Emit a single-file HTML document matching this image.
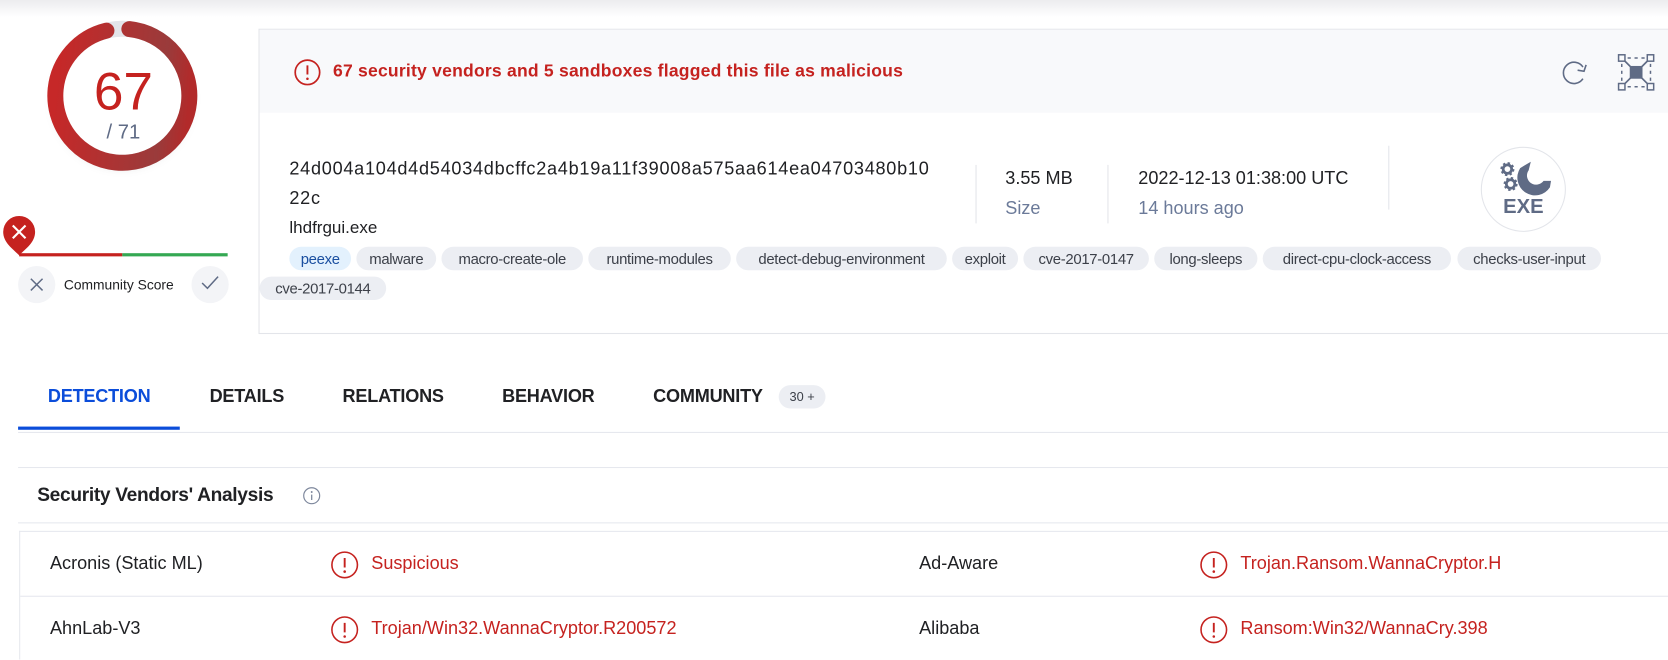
<!DOCTYPE html>
<html><head><meta charset="utf-8"><style>
*{margin:0;padding:0;box-sizing:border-box}
html,body{width:1668px;height:660px;overflow:hidden}
body{background:#fff;font-family:"Liberation Sans",Arial,sans-serif;color:#202124;position:relative}
#w{position:absolute;left:0;top:0;width:1568px;height:620px;transform:scale(1.0638);transform-origin:0 0;overflow:hidden}
.a{position:absolute;white-space:nowrap}
.tag{position:absolute;height:22px;border-radius:11px;background:#eceef3;color:#3c4049;font-size:14px;line-height:22px;text-align:center;letter-spacing:-0.3px}
.vl{position:absolute;width:1px;background:#e3e5ea}
.hl{position:absolute;height:1px;background:#e6e8ee;left:17px;right:0}
.tab{position:absolute;top:363px;font-size:17px;font-weight:bold;color:#202124;letter-spacing:-0.2px}
.row{position:absolute;font-size:17px;color:#202124}
.red{color:#c5221f}
</style></head><body><div id="w">
<div style="position:absolute;left:0;top:0;width:1568px;height:16px;background:linear-gradient(#ececee,#fff)"></div>

<svg class="a" style="left:30px;top:15px" width="170" height="170" viewBox="0 0 170 170">
<defs><linearGradient id="g" x1="0" y1="0" x2="0" y2="1"><stop offset="0" stop-color="#c62828"/><stop offset="0.8" stop-color="#9a3b3b"/><stop offset="1" stop-color="#b22a2a"/></linearGradient>
<filter id="s"><feDropShadow dx="0" dy="3" stdDeviation="5" flood-opacity="0.18"/></filter></defs>
<circle cx="85" cy="75" r="63" fill="#fff" filter="url(#s)"/>
<circle cx="85" cy="75" r="63" fill="none" stroke="#e3e5ea" stroke-width="15"/>
<circle cx="85" cy="75" r="63" fill="none" stroke="url(#g)" stroke-width="15" stroke-linecap="round" stroke-dasharray="374 500" transform="rotate(-84 85 75)"/>
</svg>
<div class="a" style="left:60px;top:58px;width:112px;text-align:center;font-size:50px;color:#c5221f;line-height:56px">67</div>
<div class="a" style="left:60px;top:114px;width:112px;text-align:center;font-size:19px;color:#5f6b85">/ 71</div>

<svg class="a" style="left:1px;top:201px" width="34" height="40" viewBox="0 0 34 40"><path d="M17 39 C11 33 2 27 2 17 A15 15 0 0 1 32 17 C32 27 23 33 17 39Z" fill="#c5221f"/><path d="M11 11 L23 23 M23 11 L11 23" stroke="#fff" stroke-width="2"/></svg>
<div class="a" style="left:18px;top:238px;width:97px;height:3px;background:#c5221f"></div>
<div class="a" style="left:115px;top:238px;width:99px;height:3px;background:#34a853"></div>
<div class="a" style="left:17px;top:250px;width:35px;height:35px;border-radius:50%;background:#f3f4f7"></div>
<svg class="a" style="left:28px;top:261px" width="13" height="13"><path d="M1 1L12 12M12 1L1 12" stroke="#5f6b85" stroke-width="1.4"/></svg>
<div class="a" style="left:60px;top:260px;font-size:13px;color:#202124">Community Score</div>
<div class="a" style="left:180px;top:250px;width:35px;height:35px;border-radius:50%;background:#f3f4f7"></div>
<svg class="a" style="left:189px;top:259px" width="17" height="14"><path d="M1 7L6 12L16 1" stroke="#5f6b85" stroke-width="1.4" fill="none"/></svg>

<div class="a" style="left:243px;top:27px;width:1430px;height:287px;border:1px solid #e3e5ea;background:#fff"></div>
<div class="a" style="left:244px;top:28px;width:1430px;height:78px;background:#f8f9fb"></div>
<svg class="a" style="left:276px;top:55px" width="26" height="26"><circle cx="13" cy="13" r="11.5" fill="none" stroke="#c5221f" stroke-width="1.6"/><path d="M13 6.5V15" stroke="#c5221f" stroke-width="1.8"/><circle cx="13" cy="19" r="1.2" fill="#c5221f"/></svg>
<div class="a" style="left:313px;top:58px;font-size:16.5px;font-weight:bold;color:#c5221f;letter-spacing:0.2px">67 security vendors and 5 sandboxes flagged this file as malicious</div>
<svg class="a" style="left:1466px;top:55px" width="32" height="28"><path d="M22 19 A10 10 0 1 1 22 8" fill="none" stroke="#5f6b85" stroke-width="1.5"/><path d="M17 11 L23 12 L25 6" fill="none" stroke="#5f6b85" stroke-width="1.5"/></svg>
<svg class="a" style="left:1520px;top:50px" width="36" height="36" viewBox="0 0 36 36"><g fill="none" stroke="#5f6b85" stroke-width="1.4"><rect x="1.5" y="1.5" width="6" height="6"/><rect x="28.5" y="1.5" width="6" height="6"/><rect x="1.5" y="28.5" width="6" height="6"/><rect x="28.5" y="28.5" width="6" height="6"/><path d="M10 4.5H13M16.5 4.5H19.5M23 4.5H26M10 31.5H13M16.5 31.5H19.5M23 31.5H26M4.5 10V13M4.5 16.5V19.5M4.5 23V26M31.5 10V13M31.5 16.5V19.5M31.5 23V26"/></g><path d="M7 7L29 29M29 7L7 29" stroke="#5f6b85" stroke-width="1.6"/><rect x="12" y="12" width="12" height="12" fill="#5f6b85"/></svg>

<div class="a" style="left:272px;top:145px;font-size:17px;letter-spacing:0.7px;line-height:28px">24d004a104d4d54034dbcffc2a4b19a11f39008a575aa614ea04703480b10<br>22c</div>
<div class="a" style="left:272px;top:206px;font-size:16px">lhdfrgui.exe</div>

<div class="vl" style="left:917px;top:155px;height:55px"></div>
<div class="a" style="left:945px;top:158px;font-size:17px">3.55 MB</div>
<div class="a" style="left:945px;top:186px;font-size:17px;color:#6b7a99">Size</div>
<div class="vl" style="left:1041px;top:155px;height:55px"></div>
<div class="a" style="left:1070px;top:158px;font-size:17px">2022-12-13 01:38:00 UTC</div>
<div class="a" style="left:1070px;top:186px;font-size:17px;color:#6b7a99">14 hours ago</div>
<div class="vl" style="left:1305px;top:137px;height:60px"></div>

<div class="a" style="left:1392px;top:138px;width:80px;height:80px;border-radius:50%;border:1px solid #e3e5ea"></div>
<svg class="a" style="left:1405px;top:148px" width="60" height="40" viewBox="0 0 60 40">
<g fill="none" stroke="#5f6b85"><circle cx="12" cy="11" r="4" stroke-width="2.6"/><circle cx="12" cy="11" r="5.6" stroke-width="2" stroke-dasharray="2.2 2.2"/><circle cx="15" cy="25" r="4" stroke-width="2.6"/><circle cx="15" cy="25" r="5.6" stroke-width="2" stroke-dasharray="2.2 2.2"/></g>
<path d="M24 10 A14 14 0 0 0 52 28 L53 22 L46 22 A8 8 0 0 1 32 12 L34 4 Z" fill="#5f6b85"/>
</svg>
<div class="a" style="left:1392px;top:184px;width:80px;text-align:center;font-size:19px;font-weight:bold;color:#5f6b85">EXE</div>

<div class="tag" style="left:272px;top:232px;width:58px;background:#e3f1fd;color:#1a4fa0">peexe</div>
<div class="tag" style="left:335px;top:232px;width:75px">malware</div>
<div class="tag" style="left:415px;top:232px;width:133px">macro-create-ole</div>
<div class="tag" style="left:553px;top:232px;width:134px">runtime-modules</div>
<div class="tag" style="left:692px;top:232px;width:198px">detect-debug-environment</div>
<div class="tag" style="left:895px;top:232px;width:62px">exploit</div>
<div class="tag" style="left:962px;top:232px;width:118px">cve-2017-0147</div>
<div class="tag" style="left:1085px;top:232px;width:97px">long-sleeps</div>
<div class="tag" style="left:1187px;top:232px;width:177px">direct-cpu-clock-access</div>
<div class="tag" style="left:1370px;top:232px;width:135px">checks-user-input</div>
<div class="tag" style="left:244px;top:260px;width:119px">cve-2017-0144</div>

<div class="tab" style="left:45px;color:#0b4dda">DETECTION</div>
<div class="tab" style="left:197px">DETAILS</div>
<div class="tab" style="left:322px">RELATIONS</div>
<div class="tab" style="left:472px">BEHAVIOR</div>
<div class="tab" style="left:614px">COMMUNITY</div>
<div class="a" style="left:732px;top:362px;width:44px;height:22px;border-radius:11px;background:#eceef3;font-size:12px;line-height:22px;text-align:center;color:#3c4049">30 +</div>
<div class="a" style="left:17px;top:401px;width:152px;height:3px;background:#0b4dda"></div>
<div class="hl" style="top:406px"></div>

<div class="hl" style="top:439px"></div>
<div class="a" style="left:35px;top:455px;font-size:18px;font-weight:bold;letter-spacing:-0.3px">Security Vendors' Analysis</div>
<svg class="a" style="left:284px;top:457px" width="18" height="18"><circle cx="9" cy="9" r="7.5" fill="none" stroke="#7d879c" stroke-width="1.1"/><path d="M9 8V13" stroke="#7d879c" stroke-width="1.2"/><circle cx="9" cy="5.5" r=".9" fill="#7d879c"/></svg>
<div class="hl" style="top:491px"></div>

<div class="hl" style="top:499px;left:18px"></div>
<div class="a" style="left:18px;top:499px;width:1px;height:121px;background:#e6e8ee"></div>
<div class="hl" style="top:560px;left:19px"></div>

<div class="row" style="left:47px;top:520px">Acronis (Static ML)</div>
<div class="row" style="left:47px;top:581px">AhnLab-V3</div>
<div class="row" style="left:864px;top:520px">Ad-Aware</div>
<div class="row" style="left:864px;top:581px">Alibaba</div>

<svg class="a" style="left:310px;top:517px" width="28" height="28"><circle cx="14" cy="14" r="12" fill="none" stroke="#c5221f" stroke-width="1.5"/><path d="M14 7.5V16.5" stroke="#c5221f" stroke-width="1.8"/><circle cx="14" cy="20.3" r="1.2" fill="#c5221f"/></svg>
<svg class="a" style="left:310px;top:578px" width="28" height="28"><circle cx="14" cy="14" r="12" fill="none" stroke="#c5221f" stroke-width="1.5"/><path d="M14 7.5V16.5" stroke="#c5221f" stroke-width="1.8"/><circle cx="14" cy="20.3" r="1.2" fill="#c5221f"/></svg>
<svg class="a" style="left:1127px;top:517px" width="28" height="28"><circle cx="14" cy="14" r="12" fill="none" stroke="#c5221f" stroke-width="1.5"/><path d="M14 7.5V16.5" stroke="#c5221f" stroke-width="1.8"/><circle cx="14" cy="20.3" r="1.2" fill="#c5221f"/></svg>
<svg class="a" style="left:1127px;top:578px" width="28" height="28"><circle cx="14" cy="14" r="12" fill="none" stroke="#c5221f" stroke-width="1.5"/><path d="M14 7.5V16.5" stroke="#c5221f" stroke-width="1.8"/><circle cx="14" cy="20.3" r="1.2" fill="#c5221f"/></svg>

<div class="row red" style="left:349px;top:520px">Suspicious</div>
<div class="row red" style="left:349px;top:581px">Trojan/Win32.WannaCryptor.R200572</div>
<div class="row red" style="left:1166px;top:520px">Trojan.Ransom.WannaCryptor.H</div>
<div class="row red" style="left:1166px;top:581px">Ransom:Win32/WannaCry.398</div>
</div></body></html>
